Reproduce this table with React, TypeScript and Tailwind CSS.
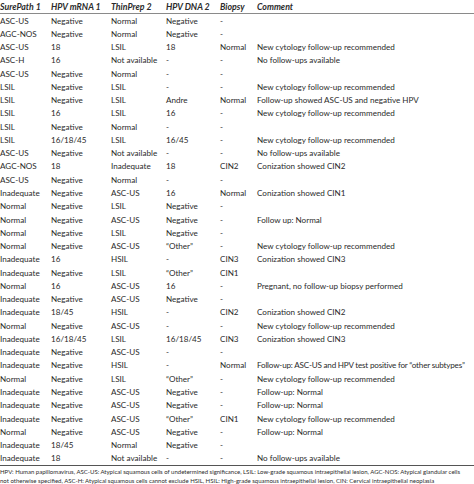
const rows: string[][] = [
  ["ASC-US", "Negative", "Normal", "Negative", "-", ""],
  ["AGC-NOS", "Negative", "Normal", "Negative", "-", ""],
  ["ASC-US", "18", "LSIL", "18", "Normal", "New cytology follow-up recommended"],
  ["ASC-H", "16", "Not available", "-", "-", "No follow-ups available"],
  ["ASC-US", "Negative", "Normal", "-", "-", ""],
  ["LSIL", "Negative", "LSIL", "-", "-", "New cytology follow-up recommended"],
  ["LSIL", "Negative", "LSIL", "Andre", "Normal", "Follow-up showed ASC-US and negative HPV"],
  ["LSIL", "16", "LSIL", "16", "-", "New cytology follow-up recommended"],
  ["LSIL", "Negative", "Normal", "-", "-", ""],
  ["LSIL", "16/18/45", "LSIL", "16/45", "-", "New cytology follow-up recommended"],
  ["ASC-US", "Negative", "Not available", "-", "-", "No follow-ups available"],
  ["AGC-NOS", "18", "Inadequate", "18", "CIN2", "Conization showed CIN2"],
  ["ASC-US", "Negative", "Normal", "-", "-", ""],
  ["Inadequate", "Negative", "ASC-US", "16", "Normal", "Conization showed CIN1"],
  ["Normal", "Negative", "LSIL", "Negative", "-", ""],
  ["Normal", "Negative", "ASC-US", "Negative", "-", "Follow up: Normal"],
  ["Normal", "Negative", "LSIL", "Negative", "-", ""],
  ["Normal", "Negative", "ASC-US", "\u201cOther\u201d", "-", "New cytology follow-up recommended"],
  ["Inadequate", "16", "HSIL", "-", "CIN3", "Conization showed CIN3"],
  ["Inadequate", "Negative", "LSIL", "\u201cOther\u201d", "CIN1", ""],
  ["Normal", "16", "ASC-US", "16", "-", "Pregnant, no follow-up biopsy performed"],
  ["Inadequate", "Negative", "ASC-US", "Negative", "-", ""],
  ["Inadequate", "18/45", "HSIL", "-", "CIN2", "Conization showed CIN2"],
  ["Normal", "Negative", "ASC-US", "-", "-", "New cytology follow-up recommended"],
  ["Inadequate", "16/18/45", "LSIL", "16/18/45", "CIN3", "Conization showed CIN3"],
  ["Inadequate", "Negative", "ASC-US", "-", "-", ""],
  ["Inadequate", "Negative", "HSIL", "-", "Normal", "Follow-up: ASC-US and HPV test positive for \u201cother subtypes\u201d"],
  ["Normal", "Negative", "LSIL", "\u201cOther\u201d", "-", "New cytology follow-up recommended"],
  ["Inadequate", "Negative", "ASC-US", "Negative", "-", "Follow-up: Normal"],
  ["Inadequate", "Negative", "ASC-US", "Negative", "-", "Follow-up: Normal"],
  ["Inadequate", "Negative", "ASC-US", "\u201cOther\u201d", "CIN1", "New cytology follow-up recommended"],
  ["Normal", "Negative", "ASC-US", "Negative", "-", "Follow-up: Normal"],
  ["Inadequate", "18/45", "Normal", "Negative", "-", ""],
  ["Inadequate", "18", "Not available", "-", "-", "No follow-ups available"],
];

const headers = ["SurePath 1", "HPV mRNA 1", "ThinPrep 2", "HPV DNA 2", "Biopsy", "Comment"];
const cols = "grid grid-cols-[51px_60px_55px_54px_37px_1fr]";

export default function App() {
  return (
    <div className="w-[474px] h-[484px] overflow-hidden bg-white text-[#2b2b2b] font-['Lato','Liberation_Sans',sans-serif]">
      <div className={`${cols} h-[14px] items-center border-b border-[#8a8a8a] text-[8.8px] font-bold italic`}>
        {headers.map((h) => (
          <div key={h} className="whitespace-nowrap">{h}</div>
        ))}
      </div>
      <div className="border-b border-[#555]">
        {rows.map((r, i) => (
          <div key={i} className={`${cols} h-[13.27px] items-center text-[8.1px]`}>
            {r.map((c, j) => (
              <div key={j} className={c.length > 50 ? "whitespace-nowrap tracking-[-0.2px]" : "whitespace-nowrap"}>
                {c}
              </div>
            ))}
          </div>
        ))}
      </div>
      <div className="pt-[2px] text-[6px] leading-[8.5px] whitespace-nowrap">
        <div>HPV: Human papillomavirus, ASC-US: Atypical squamous cells of undetermined significance, LSIL: Low-grade squamous intraepithelial lesion, AGC-NOS: Atypical glandular cells</div>
        <div>not otherwise specified, ASC-H: Atypical squamous cells cannot exclude HSIL, HSIL: High-grade squamous intraepithelial lesion, CIN: Cervical intraepithelial neoplasia</div>
      </div>
    </div>
  );
}
